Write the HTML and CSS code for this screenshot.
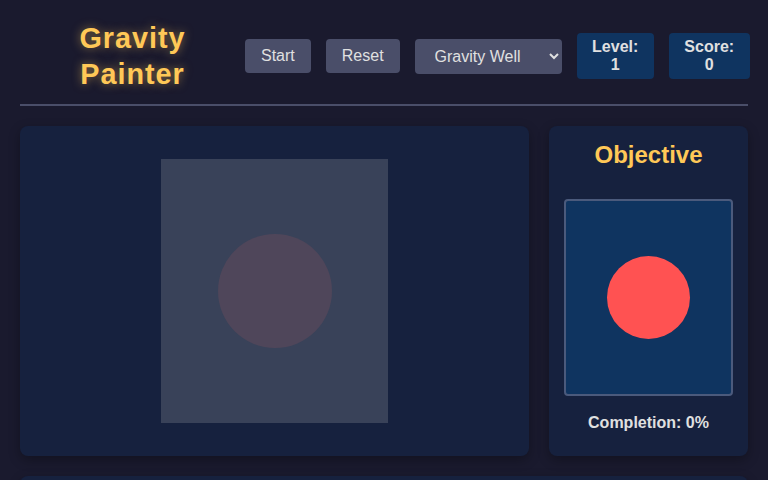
FILE: index.html
```html
<!DOCTYPE html>
<html lang="en">
<head>
<meta charset="utf-8">
<title>Gravity Painter</title>
<link rel="stylesheet" href="styles.css">
</head>
<body>
<div class="container">
  <header class="header">
    <h1 class="title">Gravity Painter</h1>
    <div class="controls">
      <button class="btn">Start</button>
      <button class="btn">Reset</button>
      <select class="mode">
        <option>Gravity Well</option>
        <option>Repulsor</option>
        <option>Orbit</option>
      </select>
      <div class="stat">Level:<br>1</div>
      <div class="stat">Score:<br>0</div>
    </div>
  </header>
  <main class="main">
    <section class="card play">
      <div class="canvas"><div class="blob"></div></div>
    </section>
    <aside class="card side">
      <h2 class="side-title">Objective</h2>
      <div class="target"><div class="target-dot"></div></div>
      <div class="completion">Completion: 0%</div>
    </aside>
  </main>
  <section class="card bottom"></section>
</div>
</body>
</html>
```

FILE: styles.css
```css
html, body {
  margin: 0;
  padding: 0;
}
body {
  background: #1a1a2e;
  color: #e0e0e0;
  font-family: "Liberation Sans", Arial, sans-serif;
  font-size: 16px;
}
.container {
  padding: 20px;
}
.header {
  display: flex;
  align-items: center;
  justify-content: space-between;
  padding-bottom: 12px;
  border-bottom: 2px solid #4a4e69;
  margin-bottom: 20px;
}
.title {
  flex: 0 0 225px;
  box-sizing: border-box;
  padding: 0 40px;
  margin: 0;
  text-align: center;
  font-size: 28.8px;
  line-height: 36px;
  letter-spacing: 1px;
  font-weight: bold;
  color: #ffc857;
  text-shadow: 0 0 10px rgba(255, 200, 87, 0.5);
}
.controls {
  display: flex;
  align-items: center;
  gap: 15px;
}
.btn {
  background: #4a4e69;
  color: #e0e0e0;
  border: none;
  border-radius: 4px;
  padding: 8px 16px;
  font-family: inherit;
  font-size: 16px;
  line-height: 18px;
  height: 34px;
}
.mode {
  width: 147px;
  height: 35px;
  background: #4a4e69;
  color: #e0e0e0;
  border: none;
  border-radius: 4px;
  padding: 8px 12px 8px 16px;
  font-family: inherit;
  font-size: 16px;
}
.stat {
  background: #0f3460;
  border-radius: 4px;
  padding: 5px 15.5px;
  font-weight: bold;
  text-align: center;
  line-height: 18px;
  min-width: 46px;
}
.main {
  display: grid;
  grid-template-columns: 1fr 199px;
  gap: 20px;
  margin-bottom: 20px;
}
.card {
  background: #16213e;
  border-radius: 8px;
  box-shadow: 0 4px 12px rgba(0, 0, 0, 0.3);
}
.play {
  display: flex;
  align-items: center;
  justify-content: center;
  padding: 33px 20px;
}
.canvas {
  width: 227px;
  height: 264px;
  background: #394259;
  display: flex;
  align-items: center;
  justify-content: center;
}
.blob {
  width: 114px;
  height: 114px;
  border-radius: 50%;
  background: #4f465a;
}
.side {
  padding: 15px;
  display: flex;
  flex-direction: column;
  align-items: stretch;
}
.side-title {
  margin: 0 0 30px;
  text-align: center;
  font-size: 24px;
  color: #ffc857;
}
.target {
  height: 193px;
  background: #0f3460;
  border: 2px solid #4b5a7c;
  border-radius: 4px;
  display: flex;
  align-items: center;
  justify-content: center;
  margin-bottom: 18px;
}
.target-dot {
  width: 83px;
  height: 83px;
  border-radius: 50%;
  background: #ff5252;
}
.completion {
  text-align: center;
  font-weight: bold;
}
.bottom {
  height: 120px;
}
```
